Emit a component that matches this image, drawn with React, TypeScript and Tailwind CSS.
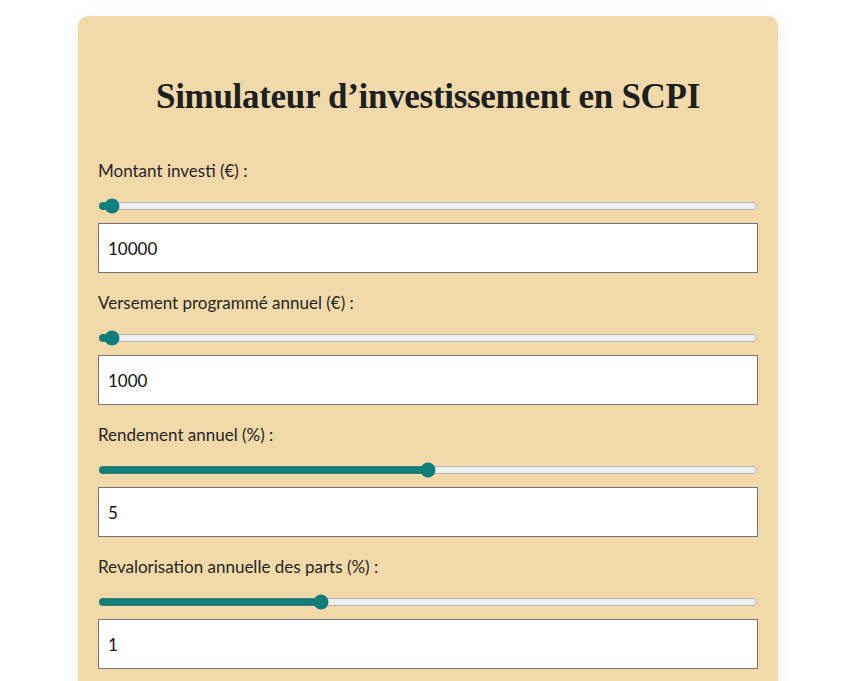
import { useState } from "react"

type Field = {
  label: string
  min: number
  max: number
  step: number
  value: number
}

const fields: Field[] = [
  { label: "Montant investi (€) :", min: 1000, max: 1000000, step: 1000, value: 10000 },
  { label: "Versement programmé annuel (€) :", min: 0, max: 100000, step: 100, value: 1000 },
  { label: "Rendement annuel (%) :", min: 0, max: 10, step: 0.1, value: 5 },
  { label: "Revalorisation annuelle des parts (%) :", min: -1, max: 5, step: 0.1, value: 1 },
  { label: "Durée de placement (années) :", min: 1, max: 30, step: 1, value: 10 },
]

function FieldRow({ field }: { field: Field }) {
  const [value, setValue] = useState(field.value)
  return (
    <div className="mb-[18px]">
      <label className="block h-6 text-[17px] leading-6 text-[#262626]">{field.label}</label>
      <input
        type="range"
        min={field.min}
        max={field.max}
        step={field.step}
        value={value}
        onChange={(e) => setValue(Number(e.target.value))}
        className="mt-[15px] block h-4 w-full accent-[#0e7f7a]"
      />
      <input
        type="number"
        value={value}
        onChange={(e) => setValue(Number(e.target.value))}
        className="mt-[9px] block h-[50px] w-full border border-[#767676] bg-white px-[9px] text-[17px] text-[#111] outline-none"
      />
    </div>
  )
}

export default function App() {
  return (
    <div className="min-h-screen bg-white pt-4" style={{ fontFamily: "Lato, 'Noto Sans', sans-serif" }}>
      <div className="ml-[78px] w-[700px] rounded-[10px] bg-[#f2d9aa] px-5 pb-10 pt-[57px] shadow-[0_4px_20px_rgba(0,0,0,0.06)]">
        <h2
          className="mb-[38px] text-center text-[35px] font-bold leading-[48px] tracking-[-0.3px] text-[#1b2020]"
          style={{ fontFamily: "'Liberation Serif', 'DejaVu Serif', serif" }}
        >
          Simulateur d’investissement en SCPI
        </h2>
        {fields.map((f) => (
          <FieldRow key={f.label} field={f} />
        ))}
        <button className="mt-2 w-full rounded-md bg-[#0e7f7a] py-3 text-white">Calculer</button>
      </div>
    </div>
  )
}
